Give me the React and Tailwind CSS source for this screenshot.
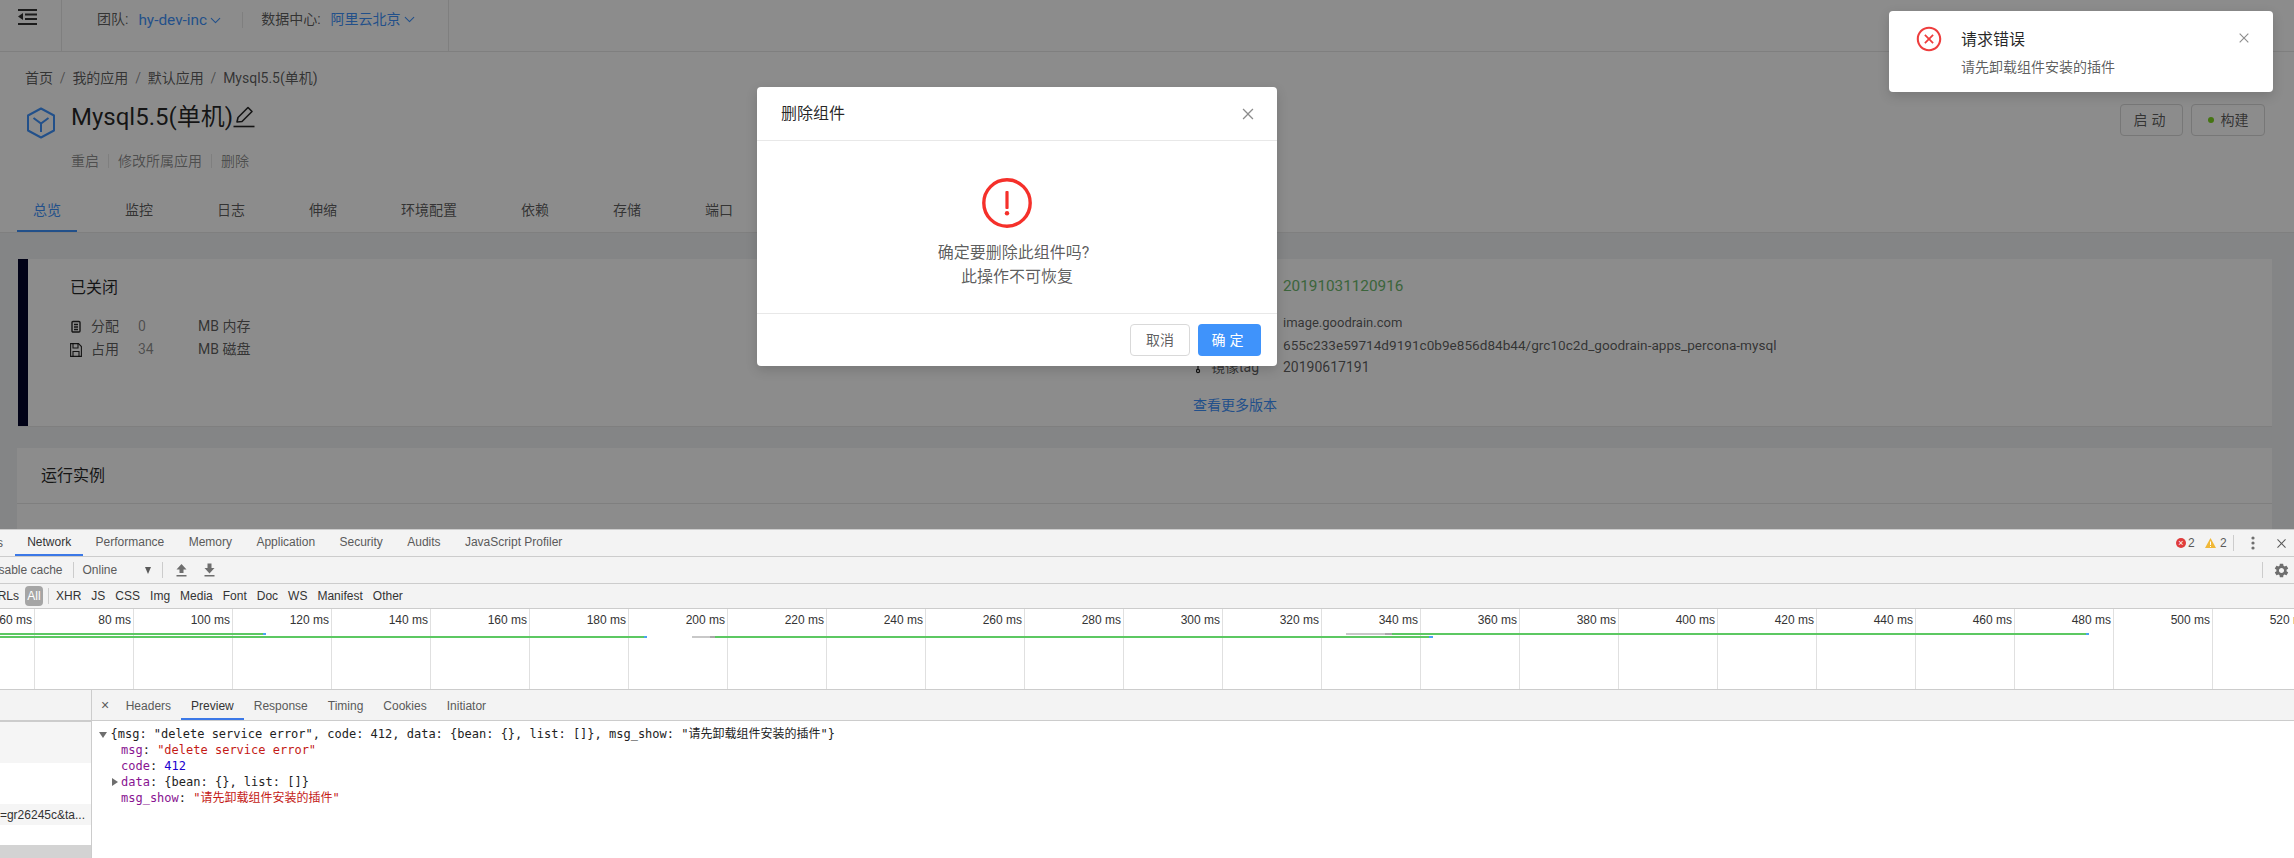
import React from 'react';
import { ChevronDown } from 'lucide-react';
import { AiOutlineClose, AiOutlineCloseCircle } from 'react-icons/ai';
import { MdSettings } from 'react-icons/md';

const pageFont = { fontFamily: 'Roboto, "Noto Sans CJK SC", sans-serif' };

const pageTabs = ['总览', '监控', '日志', '伸缩', '环境配置', '依赖', '存储', '端口'];
const devTabs = ['Network', 'Performance', 'Memory', 'Application', 'Security', 'Audits', 'JavaScript Profiler'];
const filters = ['XHR', 'JS', 'CSS', 'Img', 'Media', 'Font', 'Doc', 'WS', 'Manifest', 'Other'];
const previewTabs = ['Headers', 'Preview', 'Response', 'Timing', 'Cookies', 'Initiator'];
const ticks = Array.from({ length: 23 }, (_, i) => 80 + i * 20);

const Crumb = ({ children }) => <span className="mx-[6.8px] text-black/45">{children}</span>;

const PageHeader = () => (
  <div className="flex h-[52px] border-b border-[#e8e8e8] bg-white text-[14px] text-black/65">
    <div className="flex w-[62px] shrink-0 justify-start border-r border-[#e8e8e8] pl-[18px] pt-[9px]">
      <svg width="19" height="16" viewBox="0 0 19 16" fill="currentColor" className="text-black/80">
        <rect x="0" y="0" width="19" height="2" />
        <rect x="7" y="4.5" width="12" height="2" />
        <rect x="7" y="9" width="12" height="2" />
        <rect x="0" y="14" width="19" height="2" />
        <path d="M0 7.5 L5 4 V11 Z" />
      </svg>
    </div>
    <div className="flex h-[52px] w-[387px] shrink-0 items-start border-r border-[#e8e8e8] pl-[35px] pt-[9px]">
      <span>团队:</span>
      <span className="ml-[10px] flex items-center text-[15.4px] leading-[22px] text-[#3f93fb]">
        hy-dev-inc
        <ChevronDown size={17} strokeWidth={1.5} />
      </span>
      <span className="mx-[18px] mt-[3px] h-[16px] w-px bg-[#e8e8e8]" />
      <span>数据中心:</span>
      <span className="ml-[10px] flex items-center text-[#3f93fb]">
        阿里云北京
        <ChevronDown size={17} strokeWidth={1.5} />
      </span>
    </div>
  </div>
);

const TitleBlock = () => (
  <div className="bg-white">
    <div className="flex justify-between pl-[25px] pr-[29px]">
      <div>
        <div className="mt-[15px] flex h-[22px] items-center text-[14px] text-black/65">
          <span>首页</span>
          <Crumb>/</Crumb>
          <span>我的应用</span>
          <Crumb>/</Crumb>
          <span>默认应用</span>
          <Crumb>/</Crumb>
          <span>Mysql5.5(单机)</span>
        </div>
        <div className="mt-[18px] flex items-start">
          <svg width="30" height="32" viewBox="0 0 30 32" fill="none" stroke="#3f93fb" strokeWidth="2" className="ml-[1px] shrink-0">
            <path d="M15 1.5 L28 8.5 V23.5 L15 30.5 L2 23.5 V8.5 Z" strokeLinejoin="round" />
            <path d="M7.5 11 L15 16.5 L22.5 11 M15 16.5 V25" />
          </svg>
          <span className="-mt-[2px] ml-[15px] h-[24px] text-[24px] leading-[24px] text-black/85">Mysql5.5(单机)</span>
          <svg width="22" height="22" viewBox="0 0 22 22" fill="none" stroke="currentColor" strokeWidth="1.6" className="-mt-[1px] text-black/85">
            <path d="M4 16 L5 11.5 L15 1.5 L19 5.5 L9 15.5 Z" strokeLinejoin="round" />
            <path d="M0.5 20.5 H21.5" />
          </svg>
        </div>
        <div className="mt-[11px] flex h-[22px] items-center pl-[46px] text-[14px] text-black/45">
          <span>重启</span>
          <span className="mx-[9px] h-[14px] w-px bg-[#e8e8e8]" />
          <span>修改所属应用</span>
          <span className="mx-[9px] h-[14px] w-px bg-[#e8e8e8]" />
          <span>删除</span>
        </div>
      </div>
      <div className="mt-[52px] flex gap-[8px] text-[14px] text-black/65">
        <div className="flex h-[32px] w-[63px] items-center justify-center rounded border border-[#d9d9d9] tracking-[4px]">启动</div>
        <div className="flex h-[32px] w-[74px] items-center justify-center gap-[7px] rounded border border-[#d9d9d9]">
          <span className="h-[6px] w-[6px] rounded-full bg-[#7ed321]" />
          构建
        </div>
      </div>
    </div>
    <div className="mt-[19px] flex border-b border-[#e8e8e8] pl-[17px] text-[14px] text-black/65">
      {pageTabs.map((tab, i) => (
        <div
          key={tab}
          className={`mr-[32px] flex h-[41px] items-center border-b-2 px-[16px] ${i === 0 ? 'border-[#3f93fb] text-[#3f93fb]' : 'border-transparent'}`}
        >
          {tab}
        </div>
      ))}
    </div>
  </div>
);

const StatusCard = () => (
  <div className="ml-[18px] mr-[22px] mt-[26px] flex h-[168px] border-b border-[#e8e8e8] bg-white text-[14px] text-black/65">
    <div className="w-[10px] shrink-0 bg-[#03052b]" />
    <div className="w-[1165px] shrink-0 pl-[42px] pt-[17px]">
      <div className="text-[16px] leading-[24px] text-black/85">已关闭</div>
      <div className="mt-[15px] flex h-[23px] items-center">
        <svg width="12" height="13" viewBox="0 0 12 13" fill="none" stroke="currentColor" strokeWidth="1.4" className="text-black/85">
          <rect x="2" y="1.5" width="8" height="10.5" rx="1" />
          <path d="M4 4.5 H8 M4 7 H8 M4 9.5 H8" />
        </svg>
        <span className="ml-[9px] w-[47px]">分配</span>
        <span className="w-[60px] text-black/45">0</span>
        <span>MB 内存</span>
      </div>
      <div className="flex h-[23px] items-center">
        <svg width="12" height="14" viewBox="0 0 12 14" fill="none" stroke="currentColor" strokeWidth="1.1" className="text-black/85">
          <path d="M0.6 0.6 H8.5 L11.4 3.5 V13.4 H0.6 Z" />
          <path d="M3 0.6 V5 H8 V0.6 M3 13.4 V8.5 H9 V13.4" />
        </svg>
        <span className="ml-[9px] w-[47px]">占用</span>
        <span className="w-[60px] text-black/45">34</span>
        <span>MB 磁盘</span>
      </div>
    </div>
    <div className="pt-[16px]">
      <div className="ml-[90px] text-[15.3px] leading-[22px] text-[#6db86d]">20191031120916</div>
      <div className="ml-[90px] mt-[15px] text-[13px] leading-[22px]">image.goodrain.com</div>
      <div className="ml-[90px] text-[13.6px] leading-[22px]">655c233e59714d9191c0b9e856d84b44/grc10c2d_goodrain-apps_percona-mysql</div>
      <div className="flex items-center leading-[22px]">
        <svg width="6" height="14" viewBox="0 0 6 14" fill="none" stroke="currentColor" strokeWidth="1.2" className="ml-[3px] text-black/85">
          <circle cx="2" cy="11" r="1.6" />
          <path d="M2 9 V1 H5 M2 4 H4.5" />
        </svg>
        <span className="ml-[9px] w-[72px]">镜像tag</span>
        <span>20190617191</span>
      </div>
      <div className="mt-[16px] leading-[22px] text-[#3f93fb]">查看更多版本</div>
    </div>
  </div>
);

const InstancesCard = () => (
  <div className="ml-[17px] mr-[22px] mt-[21px] h-[100px] bg-white">
    <div className="flex h-[56px] items-center border-b border-[#e8e8e8] pl-[24px] text-[16px] text-black/85">运行实例</div>
  </div>
);

const DeleteModal = () => (
  <div className="absolute left-[757px] top-[87px] z-20 w-[520px] rounded bg-white shadow-[0_4px_12px_rgba(0,0,0,0.15)]">
    <div className="flex h-[54px] items-center justify-between border-b border-[#e8e8e8] pl-[24px] pr-[21px] text-[16px] text-black/85">
      删除组件
      <AiOutlineClose size={16} className="text-black/45" />
    </div>
    <div className="flex h-[173px] flex-col items-center border-b border-[#e8e8e8] pt-[37px] text-[16px] leading-[24px] text-black/65">
      <svg width="50" height="50" viewBox="0 0 50 50" className="-ml-[20px] shrink-0">
        <circle cx="25" cy="25" r="23.2" fill="none" stroke="#f5302a" strokeWidth="3.4" />
        <rect x="23.4" y="13" width="3.2" height="18" rx="1" fill="#f5302a" />
        <circle cx="25" cy="35.3" r="2.2" fill="#f5302a" />
      </svg>
      <div className="-ml-[7px] mt-[13px]">确定要删除此组件吗?</div>
      <div>此操作不可恢复</div>
    </div>
    <div className="flex h-[52px] items-center justify-end gap-[8px] pr-[16px] text-[14px]">
      <div className="flex h-[32px] w-[60px] items-center justify-center rounded border border-[#d9d9d9] text-black/65">取消</div>
      <div className="flex h-[32px] w-[63px] items-center justify-center rounded bg-[#3f93fb] tracking-[4px] text-white">确定</div>
    </div>
  </div>
);

const ErrorToast = () => (
  <div className="absolute left-[1889px] top-[11px] z-20 flex h-[81px] w-[384px] rounded bg-white shadow-[0_4px_12px_rgba(0,0,0,0.15)]">
    <AiOutlineCloseCircle size={28} className="ml-[26px] mt-[14px] shrink-0 text-[#ee3d3d]" />
    <div className="ml-[18px] pt-[17px]">
      <div className="text-[16px] leading-[24px] text-black/85">请求错误</div>
      <div className="mt-[4px] text-[14px] leading-[22px] text-black/65">请先卸载组件安装的插件</div>
    </div>
    <AiOutlineClose size={14} className="absolute left-[348px] top-[20px] text-black/45" />
  </div>
);

const Toolbar = () => (
  <>
    <div className="flex h-[27px] items-stretch border-b border-[#ccc] text-[#5a5a5a]">
      <div className="flex w-[15px] justify-end overflow-hidden pr-[12px] leading-[26px]">Sources</div>
      {devTabs.map((tab, i) => (
        <div
          key={tab}
          className={`border-b-2 px-[12.2px] leading-[25px] ${i === 0 ? 'border-[#3b78e7] text-[#333]' : 'border-transparent'}`}
        >
          {tab}
        </div>
      ))}
      <div className="ml-auto flex items-center pr-[6px]">
        <span className="flex h-[10px] w-[10px] items-center justify-center rounded-full bg-[#e03c3c] text-[9px] leading-none text-white">×</span>
        <span className="ml-[2px] w-[17px]">2</span>
        <svg width="11" height="10" viewBox="0 0 11 10"><path d="M5.5 0 L11 10 H0 Z" fill="#f0b838" /><rect x="5" y="3.5" width="1" height="3.5" fill="#fff" /><rect x="5" y="8" width="1" height="1" fill="#fff" /></svg>
        <span className="ml-[4px] w-[10px]">2</span>
        <span className="ml-[3px] h-[16px] w-px bg-[#ccc]" />
        <svg width="4" height="14" viewBox="0 0 4 14" fill="#6e6e6e" className="ml-[17px]"><circle cx="2" cy="2" r="1.6" /><circle cx="2" cy="7" r="1.6" /><circle cx="2" cy="12" r="1.6" /></svg>
        <AiOutlineClose size={13} className="ml-[20px] text-[#5a5a5a]" />
      </div>
    </div>
    <div className="flex h-[27px] items-center border-b border-[#ccc] text-[#333]">
      <div className="flex w-[62.5px] shrink-0 justify-end whitespace-nowrap text-[#5a5a5a]">Disable cache</div>
      <span className="ml-[10px] h-[16px] w-px bg-[#ccc]" />
      <span className="ml-[9px] w-[62px] text-[#5a5a5a]">Online</span>
      <span className="h-0 w-0 border-x-[3.5px] border-t-[7px] border-x-transparent border-t-[#5a5a5a]" />
      <span className="ml-[11px] h-[16px] w-px bg-[#ccc]" />
      <svg width="11" height="14" viewBox="0 0 11 14" fill="#6e6e6e" className="ml-[13px]"><path d="M5.5 1 L10.5 6.5 H7.5 V10 H3.5 V6.5 H0.5 Z" /><rect x="0.5" y="12" width="10" height="1.5" /></svg>
      <svg width="11" height="14" viewBox="0 0 11 14" fill="#6e6e6e" className="ml-[17px]"><path d="M5.5 10.5 L10.5 5 H7.5 V0.5 H3.5 V5 H0.5 Z" /><rect x="0.5" y="12" width="10" height="1.5" /></svg>
      <span className="ml-auto h-[16px] w-px bg-[#ccc]" />
      <MdSettings size={17} className="ml-[10px] mr-[4px] text-[#6e6e6e]" />
    </div>
    <div className="flex h-[25px] items-center border-b border-[#ccc] text-[#333]">
      <div className="flex w-[19px] shrink-0 justify-end whitespace-nowrap">Hide data URLs</div>
      <span className="ml-[6px] flex h-[20px] w-[18px] items-center justify-center rounded-[4px] bg-[#a5a5a5] text-white">All</span>
      <span className="ml-[5px] h-[16px] w-px bg-[#ccc]" />
      <div className="ml-[7px] flex gap-[10px]">
        {filters.map((f) => (
          <span key={f}>{f}</span>
        ))}
      </div>
    </div>
  </>
);

const Timeline = () => (
  <div className="relative flex h-[81px] overflow-hidden border-b border-[#ccc] bg-white text-[#333]">
    <div className="flex w-[35px] shrink-0 justify-end whitespace-nowrap border-r border-[#e0e0e0] pr-[2px] pt-[2px]">60 ms</div>
    {ticks.map((t) => (
      <div key={t} className="w-[99px] shrink-0 whitespace-nowrap border-r border-[#e0e0e0] pr-[2px] pt-[2px] text-right">
        {t} ms
      </div>
    ))}
    <svg width="2294" height="80" className="absolute left-0 top-0" shapeRendering="crispEdges">
      <rect x="0" y="24" width="263" height="2" fill="#5cc862" />
      <rect x="263" y="24" width="3" height="2" fill="#4aa3f0" />
      <rect x="0" y="27" width="644" height="2" fill="#5cc862" />
      <rect x="644" y="27" width="3" height="2" fill="#4aa3f0" />
      <rect x="692" y="27" width="18" height="2" fill="#c8c8c8" />
      <rect x="710" y="27" width="5" height="2" fill="#a8a8a8" />
      <rect x="715" y="27" width="714" height="2" fill="#5cc862" />
      <rect x="1429" y="27" width="4" height="2" fill="#4aa3f0" />
      <rect x="1346" y="24" width="39" height="2" fill="#c8c8c8" />
      <rect x="1385" y="24" width="7" height="2" fill="#a8a8a8" />
      <rect x="1392" y="24" width="694" height="2" fill="#5cc862" />
      <rect x="2086" y="24" width="3" height="2" fill="#4aa3f0" />
    </svg>
  </div>
);

const Key = ({ children }) => <span className="text-[#881391]">{children}</span>;

const Preview = () => (
  <div className="pl-[18.5px] pt-[5px] text-[12px] leading-[16px] text-[#222]" style={{ fontFamily: '"DejaVu Sans Mono", "Noto Sans CJK SC", monospace' }}>
    <div className="relative whitespace-pre">
      <span className="absolute -left-[12px] top-[6px] h-0 w-0 border-x-[4px] border-t-[6px] border-x-transparent border-t-[#6e6e6e]" />
      {'{msg: "delete service error", code: 412, data: {bean: {}, list: []}, msg_show: "请先卸载组件安装的插件"}'}
    </div>
    <div className="ml-[10.5px] whitespace-pre"><Key>msg</Key>: <span className="text-[#c41a16]">"delete service error"</span></div>
    <div className="ml-[10.5px] whitespace-pre"><Key>code</Key>: <span className="text-[#1c00cf]">412</span></div>
    <div className="relative ml-[10.5px] whitespace-pre">
      <span className="absolute -left-[9px] top-[4px] h-0 w-0 border-y-[4px] border-l-[6px] border-y-transparent border-l-[#6e6e6e]" />
      <Key>data</Key>: {'{bean: {}, list: []}'}
    </div>
    <div className="ml-[10.5px] whitespace-pre"><Key>msg_show</Key>: <span className="text-[#c41a16]">"请先卸载组件安装的插件"</span></div>
  </div>
);

const Details = () => (
  <div className="flex h-[168px]">
    <div className="flex w-[92px] shrink-0 flex-col border-r border-[#ccc] bg-white">
      <div className="h-[32px] shrink-0 border-b-2 border-[#ccc] bg-[#f3f3f3]" />
      <div className="h-[41px] shrink-0 bg-[#f5f5f5]" />
      <div className="h-[41px] shrink-0 bg-white" />
      <div className="flex h-[21px] shrink-0 items-center justify-end overflow-hidden whitespace-nowrap bg-[#f5f5f5] pr-[6px] text-[#333]">=gr26245c&amp;ta...</div>
      <div className="h-[20px] shrink-0 bg-white" />
      <div className="flex-1 bg-[#d3d3d3]" />
    </div>
    <div className="min-w-0 flex-1 bg-white">
      <div className="flex h-[31px] items-stretch border-b border-[#ccc] bg-[#f3f3f3] text-[#5a5a5a]">
        <span className="ml-[9px] w-[14.7px] self-center text-[14px] leading-none">×</span>
        {previewTabs.map((tab) => (
          <div
            key={tab}
            className={`border-b-2 px-[10px] leading-[33px] ${tab === 'Preview' ? 'border-[#3b78e7] text-[#333]' : 'border-transparent'}`}
          >
            {tab}
          </div>
        ))}
      </div>
      <Preview />
    </div>
  </div>
);

export default function App() {
  return (
    <div className="h-[858px] w-[2294px] overflow-hidden bg-white" style={pageFont}>
      <div className="relative h-[529px] overflow-hidden bg-[#f0f2f5]">
        <PageHeader />
        <TitleBlock />
        <StatusCard />
        <InstancesCard />
        <div className="absolute inset-0 z-10 bg-black/45" />
        <DeleteModal />
        <ErrorToast />
      </div>
      <div className="border-t border-[#ccc] bg-[#f3f3f3] text-[12px]" style={{ fontFamily: '"Liberation Sans", "Noto Sans CJK SC", sans-serif' }}>
        <Toolbar />
        <Timeline />
        <Details />
      </div>
    </div>
  );
}
